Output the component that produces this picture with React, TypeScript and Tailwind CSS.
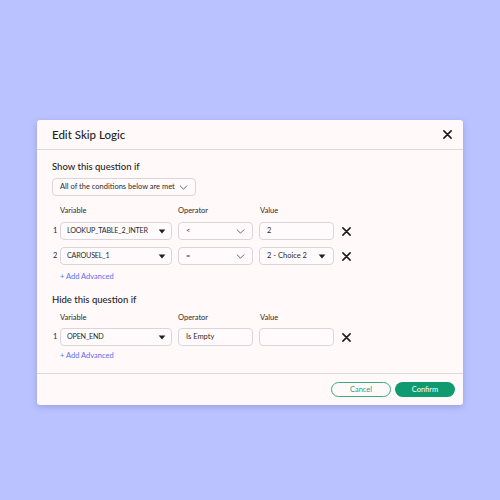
import React from 'react';

const font = { fontFamily: 'Lato, "Noto Sans", sans-serif' };

const Caret = () => (
  <svg width="8" height="5" viewBox="0 0 9 6" className="shrink-0">
    <path d="M0.5 0.5 H8.5 L4.5 5.5 Z" fill="#1f1f1f" />
  </svg>
);

const Chevron = () => (
  <svg width="9" height="5" viewBox="0 0 10 6" fill="none" className="shrink-0">
    <path d="M1 1 L5 5 L9 1" stroke="#4a4a4a" strokeWidth="1" strokeLinecap="round" strokeLinejoin="round" />
  </svg>
);

const Cross = ({ size = 9 }: { size?: number }) => (
  <svg width={size} height={size} viewBox="0 0 10 10" fill="none">
    <path d="M1 1 L9 9 M9 1 L1 9" stroke="#1a1a1a" strokeWidth="1.7" strokeLinecap="round" />
  </svg>
);

const box =
  'h-[18px] flex items-center justify-between rounded-[4px] border border-[#dbd5da] bg-[#fffbfc] px-[7px] text-[7.5px] leading-[10px] text-[#2a2a2a] whitespace-nowrap';

type Row = { n: number; variable: string; op: string; opChevron: boolean; value: string; valueCaret: boolean };

const Labels = () => (
  <div className="flex text-[7.5px] leading-[10px] text-[#2a2a2a] pl-[8px]">
    <div className="w-[118px]">Variable</div>
    <div className="w-[82px]">Operator</div>
    <div>Value</div>
  </div>
);

const ConditionRow = ({ row }: { row: Row }) => (
  <div className="flex items-center">
    <div className="w-[8px] text-[7.5px] leading-[10px] text-[#2a2a2a] pl-[1px]">{row.n}</div>
    <div className={`${box} w-[112px] pl-[6px] pr-[5px]`}>
      <span className="flex-1 min-w-0 overflow-hidden mr-[3px] text-[7.2px] tracking-[-0.2px]">{row.variable}</span>
      <Caret />
    </div>
    <div className={`${box} w-[75px] ml-[6px]`}>
      <span>{row.op}</span>
      {row.opChevron && <Chevron />}
    </div>
    <div className={`${box} w-[75px] ml-[6px]`}>
      <span>{row.value}</span>
      {row.valueCaret && <Caret />}
    </div>
    <div className="ml-[8px] flex items-center">
      <Cross size={9} />
    </div>
  </div>
);

const AddAdvanced = () => (
  <div className="pl-[8px] text-[7.5px] leading-[10px] text-[#5c6df0]">+ Add Advanced</div>
);

const App = () => {
  const showRows: Row[] = [
    { n: 1, variable: 'LOOKUP_TABLE_2_INTER', op: '<', opChevron: true, value: '2', valueCaret: false },
    { n: 2, variable: 'CAROUSEL_1', op: '=', opChevron: true, value: '2 - Choice 2', valueCaret: true },
  ];
  const hideRows: Row[] = [
    { n: 1, variable: 'OPEN_END', op: 'Is Empty', opChevron: false, value: '', valueCaret: false },
  ];

  return (
    <div className="w-[500px] h-[500px] bg-[#bac3ff] pt-[120px]" style={font}>
      <div className="mx-auto w-[426px] rounded-[3px] bg-[#fff9fa] shadow-[0_2px_6px_rgba(60,60,140,0.25)]">
        <div className="h-[30px] flex items-center justify-between px-[15px] pr-[11px] border-b border-[#ddd8de]">
          <h2 className="text-[11.5px] leading-[14px] font-medium text-[#1f1f1f]">Edit Skip Logic</h2>
          <Cross size={9} />
        </div>

        <div className="px-[15px] pt-[10px] pb-[12px] border-b border-[#ddd8de]">
          <div className="text-[9.5px] font-medium text-[#1f1f1f] leading-[14px]">Show this question if</div>
          <div className={`${box} w-[144px] mt-[4px]`}>
            <span>All of the conditions below are met</span>
            <Chevron />
          </div>
          <div className="mt-[10px]">
            <Labels />
          </div>
          <div className="mt-[6px] flex flex-col gap-[7px]">
            {showRows.map((r) => (
              <ConditionRow key={r.n} row={r} />
            ))}
          </div>
          <div className="mt-[7px]">
            <AddAdvanced />
          </div>

          <div className="mt-[11px] text-[9.5px] font-medium text-[#1f1f1f] leading-[14px]">Hide this question if</div>
          <div className="mt-[6px]">
            <Labels />
          </div>
          <div className="mt-[5px]">
            {hideRows.map((r) => (
              <ConditionRow key={r.n} row={r} />
            ))}
          </div>
          <div className="mt-[5px]">
            <AddAdvanced />
          </div>
        </div>

        <div className="flex justify-end gap-[4px] px-[8px] pt-[8px] pb-[8px]">
          <button className="w-[60px] h-[15px] rounded-full border border-[#3aa985] text-[7.5px] leading-[10px] text-[#2f9c78] flex items-center justify-center">
            Cancel
          </button>
          <button className="w-[60px] h-[15px] rounded-full bg-[#0f9a6f] text-[7.5px] leading-[10px] text-white flex items-center justify-center">
            Confirm
          </button>
        </div>
      </div>
    </div>
  );
};

export default App;
